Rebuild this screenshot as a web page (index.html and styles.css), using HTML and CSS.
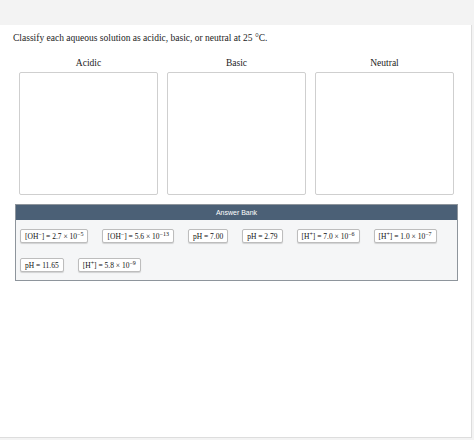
FILE: index.html
```html
<!DOCTYPE html>
<html lang="en">
<head>
  <meta charset="UTF-8">
  <meta name="viewport" content="width=device-width, initial-scale=1.0">
  <title>Classify Solutions</title>
  <link rel="stylesheet" href="styles.css">
</head>
<body>
  <div class="question">
    <p class="prompt">Classify each aqueous solution as acidic, basic, or neutral at 25 °C.</p>

    <div class="bins">
      <div class="bin">
        <div class="bin-title">Acidic</div>
        <div class="bin-drop"></div>
      </div>
      <div class="bin">
        <div class="bin-title">Basic</div>
        <div class="bin-drop"></div>
      </div>
      <div class="bin">
        <div class="bin-title">Neutral</div>
        <div class="bin-drop"></div>
      </div>
    </div>

    <div class="bank">
      <div class="bank-header">Answer Bank</div>
      <div class="bank-items">
        <span class="chip">[OH<sup>−</sup>] = 2.7 × 10<sup>−5</sup></span>
        <span class="chip">[OH<sup>−</sup>] = 5.6 × 10<sup>−13</sup></span>
        <span class="chip">pH = 7.00</span>
        <span class="chip">pH = 2.79</span>
        <span class="chip">[H<sup>+</sup>] = 7.0 × 10<sup>−6</sup></span>
        <span class="chip">[H<sup>+</sup>] = 1.0 × 10<sup>−7</sup></span>
        <span class="chip">pH = 11.65</span>
        <span class="chip">[H<sup>+</sup>] = 5.8 × 10<sup>−9</sup></span>
      </div>
    </div>
  </div>
</body>
</html>
```

FILE: styles.css
```css
body {
  margin: 0;
  background-color: #f3f3f3;
  font-family: 'Liberation Serif', 'Times New Roman', serif;
  color: #222;
}

.question {
  width: 471px;
  height: 411px;
  margin-top: 25px;
  background-color: #ffffff;
  border-right: 1px solid #dddddd;
  border-bottom: 1px solid #dddddd;
  padding-top: 1px;
  box-sizing: content-box;
}

.prompt {
  margin: 6px 0 0 13px;
  font-size: 9.5px;
  line-height: 12px;
}

.bins {
  display: flex;
  gap: 9px;
  margin: 13px 0 0 19px;
  width: 435px;
}

.bin {
  flex: 1;
}

.bin-title {
  text-align: center;
  font-size: 9.5px;
  line-height: 12px;
  margin-bottom: 3px;
}

.bin-drop {
  height: 121px;
  border: 1px solid #cfcfcf;
  border-radius: 2px;
}

.bank {
  width: 441px;
  margin: 9px 0 0 15px;
  border: 1px solid #8e959c;
  background-color: #f5f6f7;
}

.bank-header {
  background-color: #4b6076;
  color: #ffffff;
  font-family: 'Liberation Sans', Arial, sans-serif;
  font-size: 7px;
  line-height: 15px;
  text-align: center;
}

.bank-items {
  display: flex;
  flex-wrap: wrap;
  column-gap: 14px;
  row-gap: 15px;
  padding: 9px 4px 8px 4px;
}

.chip {
  display: inline-block;
  height: 14px;
  padding: 0 4px;
  background-color: #ffffff;
  border: 1px solid #bdbdbd;
  border-radius: 2px;
  box-shadow: 0 1px 1px rgba(0, 0, 0, 0.15);
  font-size: 7.5px;
  line-height: 14px;
  color: #111;
  white-space: nowrap;
  box-sizing: border-box;
}

.chip sup {
  font-size: 6px;
  line-height: 0;
  vertical-align: 3.5px;
}
```
